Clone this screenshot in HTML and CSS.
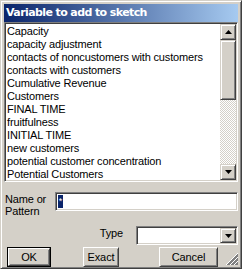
FILE: index.html
```html
<!DOCTYPE html>
<html>
<head>
<meta charset="utf-8">
<link rel="stylesheet" href="styles.css">
</head>
<body>
<div class="window">
  <div class="titlebar"><span class="title">Variable to add to sketch</span></div>
  <div class="client">
    <div class="listbox">
      <ul class="items">
        <li>Capacity</li>
        <li>capacity adjustment</li>
        <li>contacts of noncustomers with customers</li>
        <li>contacts with customers</li>
        <li>Cumulative Revenue</li>
        <li>Customers</li>
        <li>FINAL TIME</li>
        <li>fruitfulness</li>
        <li>INITIAL TIME</li>
        <li>new customers</li>
        <li>potential customer concentration</li>
        <li>Potential Customers</li>
      </ul>
      <div class="scrollbar">
        <div class="raised sb-btn"><svg width="7" height="4" viewBox="0 0 7 4"><polygon points="3.5,0 7,4 0,4" fill="#000"/></svg></div>
        <div class="sb-track">
          <div class="raised sb-thumb"></div>
        </div>
        <div class="raised sb-btn"><svg width="7" height="4" viewBox="0 0 7 4"><polygon points="0,0 7,0 3.5,4" fill="#000"/></svg></div>
      </div>
    </div>

    <div class="row-name">
      <div class="name-label">Name or<br>Pattern</div>
      <div class="edit"><span class="sel">*</span></div>
    </div>

    <div class="row-type">
      <div class="type-label">Type</div>
      <div class="combo">
        <div class="combo-field"></div>
        <div class="raised combo-btn"><svg width="7" height="4" viewBox="0 0 7 4"><polygon points="0,0 7,0 3.5,4" fill="#000"/></svg></div>
      </div>
    </div>

    <div class="row-buttons">
      <div class="default-frame"><div class="btn btn-ok">OK</div></div>
      <div class="btn btn-exact">Exact</div>
      <div class="btn btn-cancel">Cancel</div>
    </div>
  </div>
  <svg class="grip" width="12" height="12" viewBox="0 0 12 12" shape-rendering="crispEdges">
    <line x1="12" y1="0.5" x2="0.5" y2="12" stroke="#fff"/>
    <line x1="12" y1="1.5" x2="1.5" y2="12" stroke="#808080"/>
    <line x1="12" y1="2.5" x2="2.5" y2="12" stroke="#808080"/>
    <line x1="12" y1="4.5" x2="4.5" y2="12" stroke="#fff"/>
    <line x1="12" y1="5.5" x2="5.5" y2="12" stroke="#808080"/>
    <line x1="12" y1="6.5" x2="6.5" y2="12" stroke="#808080"/>
    <line x1="12" y1="8.5" x2="8.5" y2="12" stroke="#fff"/>
    <line x1="12" y1="9.5" x2="9.5" y2="12" stroke="#808080"/>
    <line x1="12" y1="10.5" x2="10.5" y2="12" stroke="#808080"/>
  </svg>
</div>
</body>
</html>
```
FILE: styles.css
```css
* { box-sizing: border-box; }
html, body { margin: 0; padding: 0; background: #d4d0c8; }
body {
  font-family: "Liberation Sans", Arial, sans-serif;
  font-size: 11px;
  color: #000;
}
.window {
  position: relative;
  width: 242px;
  height: 269px;
  background: #d4d0c8;
  border: 1px solid;
  border-color: #d4d0c8 #404040 #404040 #d4d0c8;
  box-shadow: inset 1px 1px 0 #fff, inset -1px -1px 0 #808080;
  padding: 3px;
  display: flex;
  flex-direction: column;
}
.titlebar {
  height: 18px;
  background: linear-gradient(to right, #0a246a, #a6caf0);
  display: flex;
  align-items: center;
  padding-left: 2px;
}
.title {
  font-family: "DejaVu Sans", Verdana, sans-serif;
  font-weight: bold;
  font-size: 11px;
  letter-spacing: -0.6px;
  color: #fff;
  line-height: 18px;
  white-space: nowrap;
}
.client {
  flex: 1;
  display: flex;
  flex-direction: column;
}
.listbox {
  height: 160px;
  display: flex;
  background: #fff;
  border: 1px solid;
  border-color: #808080 #fff #fff #808080;
  box-shadow: inset 1px 1px 0 #404040, inset -1px -1px 0 #d4d0c8;
  padding: 1px;
}
.items {
  flex: 1;
  list-style: none;
  margin: 0;
  padding: 1px 0 0 1px;
  overflow: hidden;
  letter-spacing: -0.15px;
}
.items li {
  height: 13px;
  line-height: 13px;
  white-space: nowrap;
}
.scrollbar {
  width: 16px;
  display: flex;
  flex-direction: column;
}
.raised {
  background: #d4d0c8;
  border: 1px solid;
  border-color: #d4d0c8 #404040 #404040 #d4d0c8;
  box-shadow: inset 1px 1px 0 #fff, inset -1px -1px 0 #808080;
}
.sb-btn {
  height: 16px;
  display: flex;
  align-items: center;
  justify-content: center;
}
.sb-btn svg { display: block; }
.sb-track {
  flex: 1;
  background: repeating-conic-gradient(#fff 0 25%, #d4d0c8 0 50%) 0 0 / 2px 2px;
}
.sb-thumb {
  height: 60px;
}
.row-name {
  display: flex;
  margin-top: 10px;
  padding-left: 1px;
}
.name-label {
  width: 50px;
  line-height: 12px;
  padding-top: 1px;
  letter-spacing: -0.15px;
}
.edit {
  flex: 1;
  height: 19px;
  background: #fff;
  border: 1px solid;
  border-color: #808080 #fff #fff #808080;
  box-shadow: inset 1px 1px 0 #404040, inset -1px -1px 0 #d4d0c8;
  padding: 2px 0 0 2px;
}
.sel {
  display: inline-block;
  background: #0a246a;
  color: #fff;
  width: 5px;
  height: 13px;
  line-height: 12px;
  font-size: 9px;
  text-align: center;
  vertical-align: top;
}
.row-type {
  display: flex;
  justify-content: flex-end;
  margin-top: 9px;
}
.type-label {
  margin-right: 13px;
  line-height: 12px;
  padding-top: 1px;
  letter-spacing: -0.15px;
}
.combo {
  width: 102px;
  height: 19px;
  display: flex;
  background: #fff;
  border: 1px solid;
  border-color: #808080 #fff #fff #808080;
  box-shadow: inset 1px 1px 0 #404040, inset -1px -1px 0 #d4d0c8;
  padding: 1px;
}
.combo-field { flex: 1; }
.combo-btn {
  width: 16px;
  display: flex;
  align-items: center;
  justify-content: center;
}
.row-buttons {
  display: flex;
  margin-top: 2px;
  padding-left: 3px;
}
.default-frame {
  border: 1px solid #000;
  width: 44px;
  height: 20px;
  display: flex;
}
.btn {
  height: 20px;
  background: #d4d0c8;
  border: 1px solid;
  border-color: #fff #404040 #404040 #fff;
  box-shadow: inset 1px 1px 0 #d4d0c8, inset -1px -1px 0 #808080;
  display: flex;
  align-items: center;
  justify-content: center;
  line-height: 12px;
  letter-spacing: -0.1px;
}
.btn-ok { flex: 1; height: 18px; }
.btn-exact { width: 36px; margin-left: 32px; }
.btn-cancel { width: 59px; margin-left: 40px; }
.grip {
  position: absolute;
  right: 3px;
  bottom: 3px;
  display: block;
}
```
